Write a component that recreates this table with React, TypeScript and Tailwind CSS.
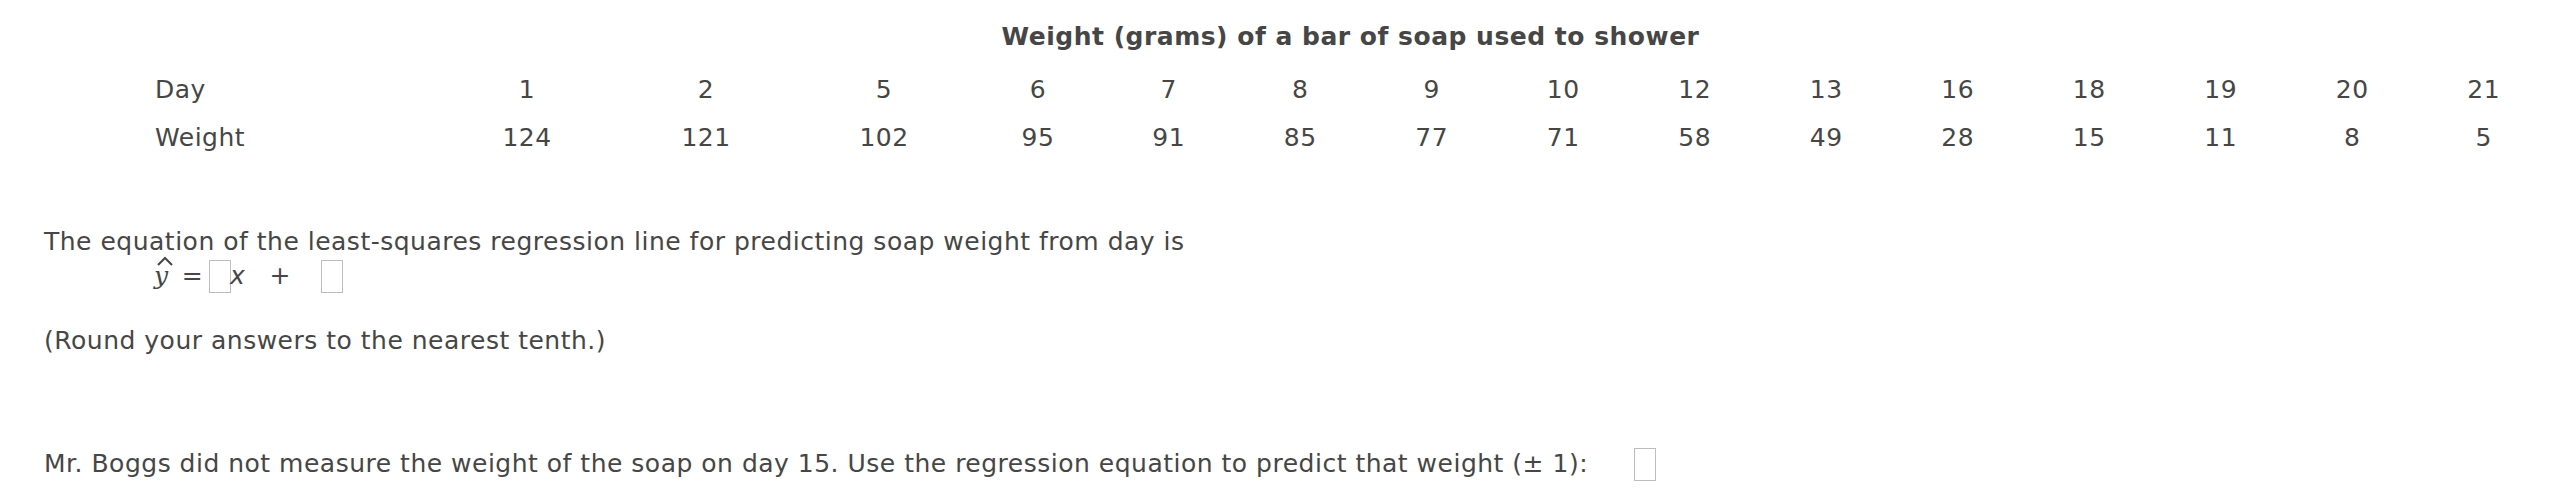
const days = [1, 2, 5, 6, 7, 8, 9, 10, 12, 13, 16, 18, 19, 20, 21];
const weights = [124, 121, 102, 95, 91, 85, 77, 71, 58, 49, 28, 15, 11, 8, 5];

// column widths, measured so each number sits under its own centre
const colW = [
  "w-[180px]", "w-[178px]", "w-[178px]", "w-[130px]",
  "w-[131.5px]", "w-[131.5px]", "w-[131.5px]", "w-[131.5px]", "w-[131.5px]", "w-[131.5px]",
  "w-[131.5px]", "w-[131.5px]", "w-[131.5px]", "w-[131.5px]", "w-[131.5px]",
];

function AnswerBox() {
  return <span className="inline-block h-[33px] w-[22px] border border-[#bdbdbd] bg-white" />;
}

function DataRow({ label, values }: { label: string; values: number[] }) {
  return (
    <div className="flex h-[48px] items-center leading-[48px]">
      <div className="w-[282px] shrink-0 tracking-[0.5px]">{label}</div>
      {values.map((v, i) => (
        <div key={i} className={`${colW[i]} shrink-0 text-center tracking-[0.5px]`}>
          {v}
        </div>
      ))}
    </div>
  );
}

export default function App() {
  return (
    <div className="min-h-[498px] w-[2572px] bg-white font-['DejaVu_Sans',Verdana,sans-serif] text-[25px] text-[#464646]">
      <div className="pl-[155px] pt-[22px]">
        <div className="w-[2391px] text-center font-bold leading-[30px] tracking-[0.5px]">
          Weight (grams) of a bar of soap used to shower
        </div>
        <div className="mt-[14px]">
          <DataRow label="Day" values={days} />
          <DataRow label="Weight" values={weights} />
        </div>
      </div>

      <div className="mt-[64px] pl-[44px] tracking-[0.5px]">
        <p className="leading-[32px]">
          The equation of the least-squares regression line for predicting soap weight from day is
        </p>
        <div className="flex h-[36px] items-center pl-[110px] leading-[36px]">
          <span className="relative inline-block font-['DejaVu_Serif',serif] italic">
            y
            <svg
              className="absolute left-[3px] top-[-2px]"
              width="16"
              height="10"
              viewBox="0 0 16 10"
            >
              <path d="M1 9 L8 2 L15 9" fill="none" stroke="#464646" strokeWidth="2" />
            </svg>
          </span>
          <span className="ml-[13px] mr-[6px]">=</span>
          <AnswerBox />
          <span className="ml-[-1px] italic">x</span>
          <span className="ml-[24px]">+</span>
          <span className="ml-[30px] flex items-center">
            <AnswerBox />
          </span>
        </div>
        <p className="mt-[31px] leading-[32px]">(Round your answers to the nearest tenth.)</p>
        <div className="mt-[89px] flex h-[36px] items-center leading-[36px]">
          <span>
            Mr. Boggs did not measure the weight of the soap on day 15. Use the regression equation to
            predict that weight (± 1):
          </span>
          <span className="ml-[46px] flex items-center">
            <AnswerBox />
          </span>
        </div>
      </div>
    </div>
  );
}
